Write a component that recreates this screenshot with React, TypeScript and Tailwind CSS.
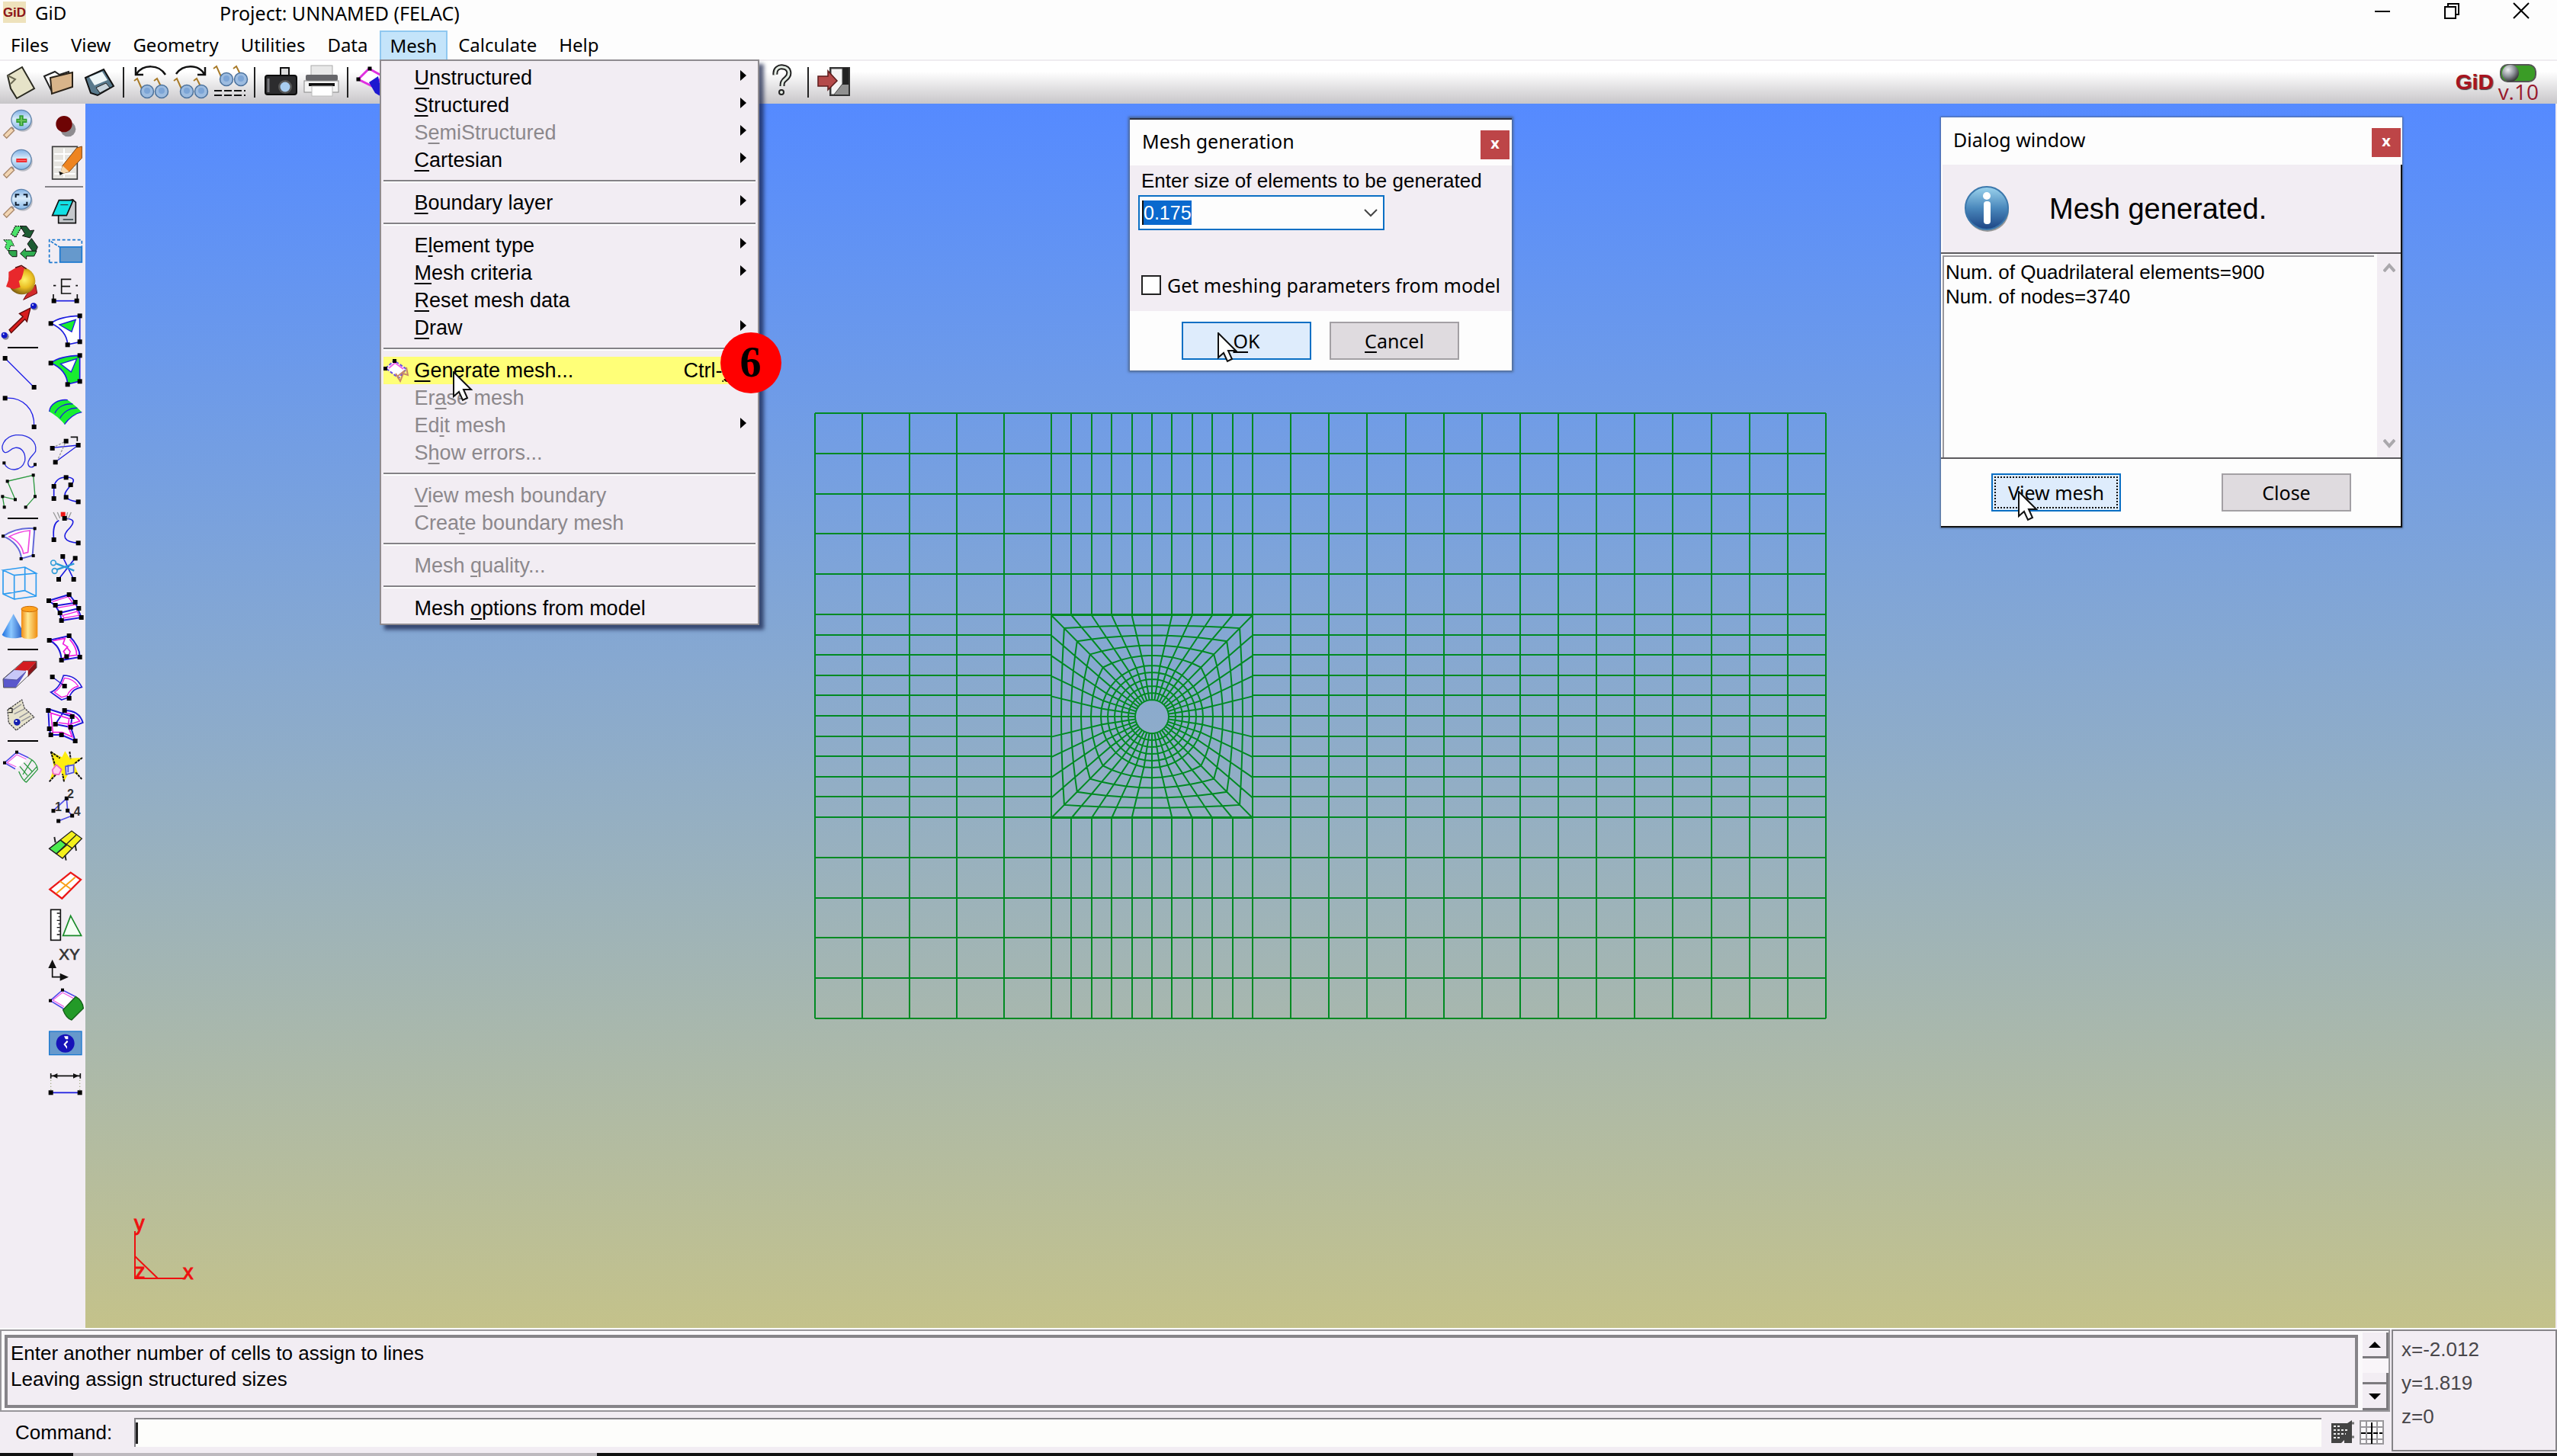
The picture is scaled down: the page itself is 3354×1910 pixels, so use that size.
import React from "react";

type Kids = { children?: React.ReactNode };

/* ---------- small drawing helpers ---------- */

const Dots = ({ at, s = 18, fill = "#000" }: { at: number[][]; s?: number; fill?: string }) => (
  <>
    {at.map(([x, y], i) => (
      <rect key={i} x={x - s / 2} y={y - s / 2} width={s} height={s} fill={fill} />
    ))}
  </>
);

const Tool = ({ x, y, label, children }: Kids & { x: number; y: number; label: string }) => (
  <button type="button" aria-label={label} className="block h-13 w-14">
    <svg viewBox={`${x} ${y} 168 156`} className="h-13 w-14 overflow-visible" fill="none">
      {children}
    </svg>
  </button>
);

const BarTool = ({ x, w, label, children }: Kids & { x: number; w: number; label: string }) => (
  <button type="button" aria-label={label} className="block shrink-0">
    <svg viewBox={`${x} 80 ${w} 56`} width={w} height={56} fill="none">
      {children}
    </svg>
  </button>
);

const BarSep = () => <div className="mx-[5px] h-10 w-0.5 shrink-0 bg-[#222]" />;

const Cursor = ({ className }: { className: string }) => (
  <svg viewBox="0 0 26 40" className={`pointer-events-none absolute h-10 w-[26px] ${className}`}>
    <path
      d="M1 1 V33 L8 27 L13 38 L19 35 L14 24 H24 Z"
      fill="#fff"
      stroke="#111"
      strokeWidth="2"
    />
  </svg>
);

const Lens = ({ dy, children }: Kids & { dy: number }) => (
  <g transform={`translate(0 ${dy})`}>
    <path d="M52 112 L38 126" stroke="#8d8f96" strokeWidth="12" />
    <path d="M44 112 L14 142 L26 154 L56 124 Z" fill="#f3d6b4" stroke="#a8876a" strokeWidth="4" />
    <circle cx="90" cy="90" r="38" fill="#b9bcc4" />
    <circle cx="84" cy="82" r="39" fill="url(#lens)" stroke="#5f84ae" strokeWidth="4" />
    {children}
  </g>
);

const Glasses = ({ x, y }: { x: number; y: number }) => (
  <g>
    <path
      d={`M${x} ${y + 3} l4 -3 l8 18 M${x + 26} ${y + 3} l4 -3 l8 16`}
      stroke="#a87a28"
      strokeWidth="2"
    />
    <circle cx={x + 17} cy={y + 17} r="8.5" fill="#9dbce0" stroke="#4b719c" strokeWidth="1.5" />
    <circle cx={x + 36} cy={y + 17} r="8.5" fill="#9dbce0" stroke="#4b719c" strokeWidth="1.5" />
    <circle cx={x + 17} cy={y + 16} r="4" fill="#7da5d6" />
    <circle cx={x + 36} cy={y + 16} r="4" fill="#7da5d6" />
  </g>
);

/* ---------- left tool columns ---------- */

const ColumnOne = () => (
  <div className="flex w-14 flex-col">
    <Tool x={0} y={18} label="Zoom in">
      <defs>
        <linearGradient id="lens" x1="0" y1="0" x2="0" y2="1">
          <stop offset="0" stopColor="#7fb0e4" />
          <stop offset=".45" stopColor="#d9ebfa" />
          <stop offset="1" stopColor="#86b8e8" />
        </linearGradient>
      </defs>
      <Lens dy={0}>
        <path d="M84 64 V106 M64 85 H106" stroke="#2d9a33" strokeWidth="16" />
        <path d="M84 68 V102 M68 85 H102" stroke="#6cc45c" strokeWidth="6" />
      </Lens>
    </Tool>
    <Tool x={0} y={174} label="Zoom out">
      <Lens dy={156}>
        <rect x="64" y="78" width="42" height="15" fill="#f0282c" />
        <path d="M68 86 H102" stroke="#ff8080" strokeWidth="3" />
      </Lens>
    </Tool>
    <Tool x={0} y={330} label="Zoom frame">
      <Lens dy={312}>
        <path
          d="M62 76 V64 H76 M92 64 H106 V76 M106 92 V104 H92 M76 104 H62 V92"
          stroke="#0c1a2c"
          strokeWidth="6"
        />
      </Lens>
    </Tool>
    <Tool x={0} y={486} label="Redraw">
      <path d="M60 500 H88 L76 518 L62 544 L44 532 Z" fill="#4be36a" stroke="#111" strokeWidth="4" strokeDasharray="6 3" />
      <path d="M80 500 H104 L118 518 L134 516 L118 546 L88 538 L98 530 Z" fill="#1d5c33" stroke="#111" strokeWidth="3" />
      <path d="M14 554 H44 L56 578 L42 576 L34 600 L20 584 L26 566 Z" fill="#4be36a" stroke="#111" strokeWidth="3" strokeDasharray="6 3" />
      <path d="M34 596 H66 V620 H48 L36 608 Z" fill="#2ea84c" stroke="#111" strokeWidth="3" />
      <path d="M124 548 L148 582 L136 610 L108 570 Z" fill="#1d5c33" stroke="#111" strokeWidth="3" />
      <path d="M80 608 L100 588 V598 H144 L134 618 H104 V630 Z" fill="#2fae50" stroke="#111" strokeWidth="3" />
    </Tool>
    <Tool x={0} y={642} label="Render">
      <defs>
        <radialGradient id="ball" cx=".6" cy=".45" r=".6">
          <stop offset="0" stopColor="#fff36a" />
          <stop offset=".5" stopColor="#e9bd22" />
          <stop offset="1" stopColor="#7a5a10" />
        </radialGradient>
      </defs>
      <path d="M92 790 L146 764 L140 730 L104 770 Z" fill="#d22a2a" stroke="#6b0e0e" strokeWidth="3" />
      <circle cx="86" cy="716" r="53" fill="url(#ball)" />
      <path d="M34 680 L62 664 L78 656 L96 664 L90 690 L84 708 L74 716 L80 740 L54 748 L24 738 L34 710 Z" fill="#e8282c" />
      <path d="M60 664 L84 655 L104 668" stroke="#5c1010" strokeWidth="5" />
    </Tool>
    <Tool x={0} y={798} label="Rotate">
      <path d="M36 908 L90 856 L76 844 L120 822 L106 876 L98 866 L44 920 Z" fill="#d81c1c" stroke="#5e0808" strokeWidth="4" />
      <circle cx="136" cy="818" r="13" fill="#8a8a96" />
      <circle cx="132" cy="814" r="12" fill="#1018c8" />
      <circle cx="22" cy="934" r="13" fill="#8a8a96" />
      <circle cx="17" cy="929" r="12" fill="#1018c8" />
      <Dots at={[[129, 810], [14, 925]]} s={5} fill="#fff" />
    </Tool>
    <SideSep />
    <Tool x={0} y={1002} label="Line">
      <path d="M20 1020 L134 1134" stroke="#2020e8" strokeWidth="4" />
      <Dots at={[[20, 1020], [134, 1134]]} />
    </Tool>
    <Tool x={0} y={1158} label="Arc">
      <path d="M20 1177 C90 1172 138 1220 134 1290" stroke="#2020e8" strokeWidth="4" />
      <Dots at={[[20, 1177], [134, 1290]]} />
    </Tool>
    <Tool x={0} y={-36} label="Spline">
      <path
        d="M16 82 C30 118 84 118 98 74 C102 40 84 20 60 22 C36 26 36 46 18 40 C-4 26 14 -22 62 -28 C116 -32 146 0 140 36 C134 50 112 60 110 84 C114 104 130 102 138 88"
        stroke="#2a30e0"
        strokeWidth="4"
      />
      <Dots at={[[16, 82], [138, 88]]} s={12} />
    </Tool>
    <Tool x={0} y={120} label="Polyline">
      <path d="M17 256 L10 214 L60 226 L29 154 L131 130 L138 214 L101 256" stroke="#2c9a40" strokeWidth="4" />
      <Dots at={[[17, 256], [10, 214], [60, 226], [29, 154], [131, 130], [138, 214], [101, 256]]} s={12} />
    </Tool>
    <SideSep />
    <Tool x={0} y={324} label="NURBS surface">
      <path d="M12 370 C50 345 90 335 136 340 L128 446 L84 458 C82 420 52 385 12 370 Z" fill="#fff" stroke="#6468d8" strokeWidth="6" />
      <path d="M36 372 C66 356 90 350 118 348 L110 434 L92 438 C88 410 66 384 36 372 Z" stroke="#f048e0" strokeWidth="5" />
      <Dots at={[[12, 370], [137, 340], [131, 447], [83, 459]]} s={12} />
    </Tool>
    <Tool x={0} y={480} label="Volume">
      <path
        d="M12 504 L98 492 L142 516 L56 524 Z M12 504 V598 L56 618 V524 M56 618 L142 606 V516 M98 492 V584 L142 606 M98 584 L12 598"
        stroke="#2e9cf0"
        strokeWidth="5"
      />
    </Tool>
    <Tool x={0} y={636} label="Create object">
      <defs>
        <linearGradient id="cyl" x1="0" y1="0" x2="1" y2="0">
          <stop offset="0" stopColor="#f08a10" />
          <stop offset=".4" stopColor="#ffe890" />
          <stop offset="1" stopColor="#ee8c10" />
        </linearGradient>
        <linearGradient id="cone" x1="0" y1="0" x2="1" y2="0">
          <stop offset="0" stopColor="#1c6fe0" />
          <stop offset=".4" stopColor="#8cc8ff" />
          <stop offset="1" stopColor="#1048b8" />
        </linearGradient>
      </defs>
      <path d="M53 676 L98 758 C90 776 20 776 8 758 Z" fill="url(#cone)" />
      <path d="M84 656 V764 C90 778 142 778 148 764 V656 Z" fill="url(#cyl)" />
      <ellipse cx="116" cy="657" rx="32" ry="11" fill="#ffa21c" stroke="#c86c08" strokeWidth="3" />
    </Tool>
    <SideSep />
    <Tool x={0} y={840} label="Delete">
      <path d="M12 932 L60 896 H108 L62 966 H14 Z" fill="#5a58cc" />
      <path d="M12 932 L56 896 H110 L66 936 Z" fill="#c8c8f8" stroke="#55569c" strokeWidth="3" />
      <path d="M56 896 L92 862 H144 L110 900 Z" fill="#d41c20" />
      <path d="M110 900 L144 862 V888 L108 926 Z" fill="#8c1418" />
      <path d="M106 898 V930" stroke="#fff" strokeWidth="7" />
      <path d="M12 932 L92 862 H144 V888 L62 966 H14 Z" stroke="#555" strokeWidth="3" />
    </Tool>
    <Tool x={0} y={996} label="List">
      <path d="M30 1054 L86 1014 L96 1046 L134 1082 L64 1134 L34 1104 Z" fill="#e6e2cc" stroke="#444" strokeWidth="4" strokeDasharray="8 3" />
      <path d="M50 1054 L84 1032 M56 1070 L96 1050 M76 1084 L110 1064 M84 1098 L120 1078" stroke="#8e8e96" strokeWidth="4" />
      <path d="M34 1048 h14 v16 h-14" stroke="#222" strokeWidth="4" />
      <circle cx="67" cy="1102" r="13" fill="#1620b0" />
      <Dots at={[[64, 1098]]} s={6} fill="#fff" />
    </Tool>
    <SideSep />
    <Tool x={0} y={1200} label="Toggle mesh view">
      <path d="M18 1262 L66 1220 L112 1244 L60 1288 Z" fill="#fff" />
      <path d="M60 1286 L18 1262 L66 1220 L112 1242" stroke="#5048e8" strokeWidth="5" />
      <path d="M64 1278 L28 1262 L66 1230 L104 1248" stroke="#f060e8" strokeWidth="4" />
      <path
        d="M112 1242 C136 1254 146 1268 148 1288 L104 1338 C90 1334 80 1310 74 1296 M78 1276 L108 1312 M94 1262 L126 1296 M126 1250 L90 1308 M146 1276 L96 1330"
        stroke="#2c9a40"
        strokeWidth="4"
      />
      <Dots at={[[18, 1262], [66, 1220]]} s={12} />
    </Tool>
  </div>
);

const SideSep = () => (
  <div className="flex h-4 items-center justify-center pl-1">
    <div className="h-0.5 w-10 bg-black" />
  </div>
);

const ColumnTwo = () => (
  <div className="flex w-14 flex-col">
    <Tool x={168} y={18} label="Record">
      <circle cx="268" cy="118" r="30" fill="#8e8c90" />
      <circle cx="252" cy="98" r="32" fill="#6e0404" />
    </Tool>
    <Tool x={168} y={174} label="Edit table">
      <rect x="206" y="187" width="98" height="128" fill="#e6e4e0" stroke="#3a3a3a" strokeWidth="5" />
      <path d="M214 216 H296 M214 242 H296 M214 268 H296 M252 194 V308 M214 294 H296" stroke="#fff" strokeWidth="6" />
      <path d="M246 262 L302 192 L322 186 V232 L272 286 L240 294 Z" fill="#ee8420" stroke="#7c4818" strokeWidth="3" />
      <path d="M246 262 L272 286 L236 296 Z" fill="#f4d8b0" />
      <path d="M232 284 L250 292 L236 300 Z" fill="#111" />
    </Tool>
    <div className="flex h-2.5 items-center justify-center">
      <div className="h-0.5 w-[50px] bg-[#858388]" />
    </div>
    <Tool x={168} y={360} label="Book">
      <path d="M230 410 L286 396 L298 406 V488 H230 Z" fill="#c6c8cc" stroke="#111" strokeWidth="5" />
      <path d="M232 398 H288 L262 458 H206 Z" fill="#12e0e4" stroke="#111" strokeWidth="5" />
      <path d="M238 416 H268 M248 474 H288" stroke="#2a3a40" strokeWidth="4" />
    </Tool>
    <Tool x={168} y={516} label="Scale view">
      <rect x="236" y="582" width="86" height="60" fill="#6699cc" stroke="#1a78d0" strokeWidth="5" />
      <path d="M194 643 V554 H322 V580 M194 643 H234" stroke="#1a78d0" strokeWidth="5" strokeDasharray="12 8" />
      <path d="M200 560 L234 582" stroke="#1a78d0" strokeWidth="5" strokeDasharray="12 5" />
    </Tool>
    <Tool x={168} y={672} label="Edge size">
      <path d="M280 709 H242 V765 H280 M242 737 H276 M210 734 H220 M298 734 H306 M210 768 V790 M304 768 V790" stroke="#111" strokeWidth="5" />
      <path d="M212 794 H302" stroke="#1c1ce0" strokeWidth="5" />
      <Dots at={[[212, 794], [302, 794]]} />
    </Tool>
    <Tool x={168} y={828} label="Surface hole">
      <path d="M200 882 C230 860 270 854 314 853 V956 L266 966 C264 930 240 900 200 882 Z" fill="#fff" stroke="#1c1ce0" strokeWidth="5" />
      <path d="M234 888 L298 868 L282 916 Z" fill="#18ee30" stroke="#1c1ce0" strokeWidth="4" />
      <Dots at={[[200, 883], [314, 853], [314, 955], [266, 967]]} />
    </Tool>
    <Tool x={168} y={984} label="Surface fill">
      <path d="M200 1038 C230 1016 270 1010 314 1009 V1110 L266 1122 C264 1086 240 1056 200 1038 Z" fill="#18ee30" stroke="#1c1ce0" strokeWidth="5" />
      <path d="M238 1042 L302 1022 L280 1074 Z" fill="#fff" stroke="#1c1ce0" strokeWidth="4" />
      <Dots at={[[200, 1039], [314, 1009], [314, 1111], [266, 1123]]} />
    </Tool>
    <Tool x={168} y={1140} label="Parallel surfaces">
      <path d="M194 1230 C196 1200 230 1180 266 1184 C284 1196 292 1204 304 1214 L322 1232 C296 1236 270 1256 254 1280 C240 1262 214 1240 194 1230 Z" fill="#18ee30" />
      <path
        d="M194 1230 C196 1200 230 1180 266 1184 M216 1236 C226 1212 256 1196 286 1200 M236 1256 C250 1230 276 1214 304 1216 M254 1280 C270 1256 296 1236 322 1232"
        stroke="#1c1ce0"
        strokeWidth="4"
      />
    </Tool>
    <Tool x={168} y={-54} label="Swap lines">
      <path d="M206 22 L308 12 L218 78" stroke="#1c1ce0" strokeWidth="4" />
      <path d="M206 22 L260 -4 L226 72" stroke="#999" strokeWidth="4" strokeDasharray="9 5" />
      <path d="M278 -20 H304 V-4" stroke="#111" strokeWidth="5" />
      <Dots at={[[206, 24], [260, -4], [308, 12], [218, 79]]} />
    </Tool>
    <Tool x={168} y={102} label="Edit spline">
      <path d="M212 222 V174 C220 144 240 138 260 138 C286 138 300 148 278 170 C256 196 250 206 260 216 C276 234 294 232 308 235" stroke="#1c1ce0" strokeWidth="5" />
      <Dots at={[[212, 222], [212, 174], [260, 139], [278, 168], [260, 217], [308, 235]]} />
    </Tool>
    <Tool x={168} y={258} label="Split spline">
      <path d="M212 384 C208 350 212 316 232 308 M256 300 C290 302 296 312 276 336 C240 370 250 392 308 397" stroke="#1c1ce0" strokeWidth="5" />
      <path d="M210 276 L226 306 M226 276 L236 300 M280 276 L266 306 M266 276 L260 300" stroke="#999" strokeWidth="4" />
      <Dots at={[[248, 284]]} fill="#f01818" />
      <Dots at={[[212, 384], [308, 397], [254, 300]]} />
    </Tool>
    <Tool x={168} y={414} label="Trim">
      <path d="M246 450 L290 540 M296 456 L230 540" stroke="#1c1ce0" strokeWidth="5" />
      <path d="M222 478 L292 506 M222 502 L292 478" stroke="#2e9cd8" strokeWidth="7" />
      <circle cx="210" cy="475" r="10" stroke="#2e9cd8" strokeWidth="5" />
      <circle cx="215" cy="507" r="10" stroke="#2e9cd8" strokeWidth="5" />
      <Dots at={[[247, 450], [296, 457], [231, 540], [290, 540]]} />
    </Tool>
    <Tool x={168} y={570} label="Coons surface">
      <path d="M192 624 L272 600 L322 690 L242 702 Z" fill="#fff" />
      <path d="M192 624 L272 600 L296 630 L320 690 L242 702 L236 672 L216 642 Z M216 644 L296 632 M236 672 L310 654" stroke="#2018d8" strokeWidth="6" />
      <path d="M206 628 L268 608 L284 630 M226 652 L296 640 M246 682 L304 666 L310 682 L252 692 Z" stroke="#f020e0" strokeWidth="4" />
      <Dots at={[[192, 624], [272, 600], [296, 630], [218, 642], [310, 654], [236, 672], [320, 690], [242, 702]]} />
    </Tool>
    <Tool x={168} y={726} label="Cut surface">
      <path d="M194 780 L272 762 C300 790 314 816 314 846 L242 858 C240 820 224 794 194 780 Z" fill="#fff" stroke="#2018d8" strokeWidth="6" />
      <path d="M208 782 L256 772 L248 794 L266 806 L250 824 L262 842 L248 850 M274 776 C294 798 302 816 302 838 L270 842 L276 824 L262 806" stroke="#f020e0" strokeWidth="5" />
      <Dots at={[[194, 780], [272, 762], [314, 846], [242, 858], [262, 844]]} />
    </Tool>
    <Tool x={168} y={882} label="Offset surface">
      <path d="M250 918 C284 918 308 936 322 964 C300 968 284 976 272 1004 L242 1014 L200 984 C222 976 240 950 250 918 Z" fill="#fff" stroke="#2018d8" strokeWidth="5" />
      <path d="M254 928 C278 930 296 942 308 960 C284 966 272 980 264 998 L242 1004 L214 984 C234 974 246 950 254 928 Z" stroke="#f020e0" strokeWidth="4" />
      <path d="M206 924 L254 960" stroke="#2018d8" strokeWidth="4" />
      <Dots at={[[206, 924], [254, 960], [272, 1008]]} />
    </Tool>
    <Tool x={168} y={1038} label="Join surfaces">
      <path
        d="M190 1050 L284 1080 L278 1120 L296 1176 L242 1152 L200 1152 L194 1128 Z M254 1056 C290 1056 316 1070 326 1104 L278 1122 L218 1110 L254 1056"
        fill="#fff"
        stroke="#2018d8"
        strokeWidth="6"
      />
      <path d="M200 1066 L272 1088 L268 1118 L284 1160 L244 1142 L208 1142 Z M258 1066 C284 1066 302 1080 314 1098 L276 1110 L230 1104" stroke="#f020e0" strokeWidth="5" />
      <Dots at={[[190, 1056], [254, 1056], [284, 1080], [218, 1110], [278, 1122], [194, 1128], [200, 1152], [242, 1152], [296, 1176]]} />
    </Tool>
    <Tool x={168} y={1194} label="Explode">
      <path d="M200 1218 L244 1240 L256 1216 L274 1244 L324 1242 L292 1268 L310 1310 L274 1296 L252 1336 L240 1296 L196 1330 L212 1280 Z" fill="#ffee10" />
      <path d="M200 1218 L236 1244 M274 1218 L278 1246 M324 1242 L292 1266 M298 1300 L322 1326 M252 1336 L246 1306 M194 1336 L222 1306 M200 1218 L216 1270" stroke="#111" strokeWidth="6" strokeDasharray="10 3" />
      <path d="M206 1290 L222 1270 L242 1288 L232 1308 L210 1306 Z" fill="#ffd0f0" stroke="#f060c8" strokeWidth="5" />
      <path d="M258 1276 L290 1270 V1300 L260 1308 Z M268 1270 V1300" fill="#e0e0fc" stroke="#4c50e0" strokeWidth="5" />
    </Tool>
    <Tool x={168} y={30} label="Renumber">
      <path d="M210 130 L262 82 L266 130 L284 150 L230 171" stroke="#5050e8" strokeWidth="5" />
      <Dots at={[[210, 131], [262, 82], [266, 130], [284, 150], [230, 171]]} s={15} />
      <g fill="#333" fontFamily="Liberation Sans" fontWeight="700" fontSize="48">
        <text x="216" y="132">1</text>
        <text x="264" y="80">2</text>
        <text x="290" y="150">4</text>
      </g>
    </Tool>
    <Tool x={168} y={186} label="Normals">
      <path d="M194 280 L282 210 L322 240 L246 318 Z" fill="#f4f01c" stroke="#222" strokeWidth="4" />
      <path d="M194 280 L238 246 L262 266 L222 300 Z" fill="#4cec50" stroke="#222" strokeWidth="4" />
      <path d="M238 246 L286 280 M222 300 L300 226" stroke="#222" strokeWidth="4" />
      <path d="M214 234 L218 256 M296 266 L300 288 M256 306 L260 326" stroke="#222" strokeWidth="6" />
    </Tool>
    <Tool x={168} y={342} label="Boundary">
      <path d="M196 440 L278 374 L318 402 L244 476 Z" fill="#fff" stroke="#ec1818" strokeWidth="7" />
      <path d="M236 408 L278 438 M222 456 L296 392" stroke="#f8a018" strokeWidth="6" />
    </Tool>
    <Tool x={168} y={498} label="Measure">
      <rect x="200" y="520" width="38" height="120" fill="#fff" stroke="#111" strokeWidth="5" />
      <path d="M236 534 H224 M236 548 H230 M236 562 H224 M236 576 H230 M236 590 H224 M236 604 H230 M236 618 H224" stroke="#111" strokeWidth="4" />
      <path d="M278 544 L320 622 H248 Z" fill="#f4fff4" stroke="#188a28" strokeWidth="5" />
    </Tool>
    <Tool x={168} y={654} label="Coordinates">
      <text x="232" y="718" fill="#333" stroke="#333" strokeWidth="2" fontFamily="Liberation Sans" fontSize="62">
        XY
      </text>
      <path d="M206 736 V785 H250" stroke="#111" strokeWidth="5" />
      <path d="M206 716 L222 750 H190 Z M270 785 L236 770 V800 Z" fill="#111" />
    </Tool>
    <Tool x={168} y={810} label="Surface mesh">
      <path d="M198 878 L246 836 L296 864 L250 912 Z" fill="#fff" />
      <path d="M250 910 L198 878 L246 836 L296 862" stroke="#5048e8" strokeWidth="5" />
      <path d="M252 902 L208 876 L246 846 L288 868" stroke="#f060e8" strokeWidth="4" />
      <path d="M298 862 C316 872 326 886 328 908 L282 954 C266 950 254 930 248 914 Z" fill="#239a28" stroke="#145c18" strokeWidth="4" />
      <Dots at={[[198, 878], [246, 836]]} s={12} />
    </Tool>
    <Tool x={168} y={966} label="Information">
      <rect x="194" y="999" width="127" height="92" fill="#6699cc" stroke="#1a78d0" strokeWidth="4" />
      <circle cx="257" cy="1046" r="36" fill="#1612b8" />
      <path d="M252 1018 H268 V1030 H258 Z M264 1034 L250 1050 L264 1068 V1058 L258 1050 L268 1040 Z" fill="#fff" />
    </Tool>
    <Tool x={168} y={1122} label="Dimension">
      <path d="M200 1174 H316 M200 1164 V1184 M316 1164 V1184" stroke="#111" strokeWidth="5" />
      <path d="M206 1174 L226 1164 V1184 Z M310 1174 L288 1164 V1184 Z" fill="#111" />
      <path d="M200 1190 V1232 M314 1190 V1232" stroke="#aab08c" strokeWidth="4" strokeDasharray="4 8" />
      <path d="M200 1240 H314" stroke="#1c1ce0" strokeWidth="5" />
      <Dots at={[[200, 1240], [314, 1240]]} />
    </Tool>
  </div>
);

/* ---------- top bar ---------- */

const Caption = ({ label, children }: Kids & { label: string }) => (
  <button type="button" aria-label={label} className="flex w-[91px] justify-center">
    <svg viewBox="0 0 24 24" className="h-6 w-6" fill="none" stroke="#000" strokeWidth="2">
      {children}
    </svg>
  </button>
);

const Toolbar = () => (
  <div className="flex h-14 items-center bg-linear-to-b from-white from-25% to-[#c8c6c9]">
    <BarTool x={0} w={52} label="New">
      <path d="M10 99 L29 88 L45 116 L22 129 L14 116 Z" fill="#e6e3c8" stroke="#2a2a20" strokeWidth="2" />
      <path d="M10 99 L20 104 L14 110" stroke="#6c6a54" strokeWidth="2" />
    </BarTool>
    <BarTool x={52} w={52} label="Open">
      <path d="M58 100 L72 94 L78 98 L90 94 L92 112 L68 120 Z" fill="#fff" stroke="#222" strokeWidth="2" />
      <path d="M66 102 L95 95 V114 L68 123 Z" fill="#d8b48a" stroke="#2a2218" strokeWidth="2" />
    </BarTool>
    <BarTool x={104} w={52} label="Save">
      <path d="M112 102 L136 91 L149 113 L128 125 L119 122 Z" fill="#58798c" stroke="#111" strokeWidth="2" />
      <path d="M117 101 L134 94 L141 105 L124 112 Z" fill="#eef6f8" />
      <path d="M126 115 L139 109 L144 115 L131 122 Z" fill="#c8d4dc" stroke="#222" strokeWidth="1" />
    </BarTool>
    <BarSep />
    <BarTool x={168} w={56} label="Previous view">
      <path d="M179 97 C188 84 208 84 217 98 M178 88 V98 H188" stroke="#111" strokeWidth="2.5" />
      <Glasses x={176} y={103} />
    </BarTool>
    <BarTool x={224} w={54} label="Next view">
      <path d="M231 97 C240 84 260 84 268 97 M269 88 V98 H259" stroke="#111" strokeWidth="2.5" />
      <Glasses x={228} y={103} />
    </BarTool>
    <BarTool x={278} w={50} label="Views list">
      <Glasses x={280} y={87} />
      <path d="M281 119 H322 M281 125 H322" stroke="#111" strokeWidth="2" strokeDasharray="10 3" />
    </BarTool>
    <BarSep />
    <BarTool x={340} w={54} label="Snapshot">
      <path d="M368 98 V89 H379 V98" fill="#ddd" stroke="#111" strokeWidth="2" />
      <rect x="348" y="99" width="41" height="25" rx="3" fill="#2c2c2e" stroke="#0c0c0c" strokeWidth="2" />
      <path d="M352 103 V121" stroke="#77777c" strokeWidth="3" />
      <circle cx="374" cy="114" r="9" fill="#555" />
      <circle cx="374" cy="114" r="6.5" fill="#a8cdf0" />
    </BarTool>
    <BarTool x={394} w={56} label="Print">
      <rect x="408" y="86" width="28" height="14" fill="#e8e8e8" stroke="#aaa" />
      <rect x="401" y="98" width="42" height="8" rx="2" fill="#66666a" />
      <rect x="399" y="106" width="45" height="15" fill="#f4f4f4" stroke="#888" />
      <path d="M405 111 H439" stroke="#111" strokeWidth="4" />
      <rect x="409" y="113" width="27" height="13" fill="#fff" stroke="#bbb" />
    </BarTool>
    <BarSep />
    <BarTool x={462} w={50} label="Mesh view">
      <path d="M470 104 L484 90 L502 100 L490 114 Z" fill="#fff" stroke="#e030e0" strokeWidth="3" />
      <path d="M484 108 L496 100 L502 128 L492 122 Z" fill="#1c18d0" />
      <Dots at={[[470, 104], [485, 90]]} s={5} />
    </BarTool>
    <div className="w-[484px] shrink-0" />
    <BarTool x={996} w={58} label="Help">
      <path d="M1017 98 C1016 90 1022 87 1027 88 C1036 89 1037 98 1031 103 C1026 107 1026 109 1026 113" stroke="#222" strokeWidth="7" />
      <path d="M1017 98 C1016 90 1022 87 1027 88 C1036 89 1037 98 1031 103 C1026 107 1026 109 1026 113" stroke="#e4ece4" strokeWidth="3" />
      <circle cx="1025" cy="121" r="3" fill="#e4ece4" stroke="#222" strokeWidth="2" />
    </BarTool>
    <BarSep />
    <BarTool x={1066} w={54} label="Exit">
      <rect x="1089" y="89" width="25" height="36" fill="#909090" stroke="#333" strokeWidth="2" />
      <rect x="1105" y="89" width="8" height="22" fill="#222" />
      <path d="M1090 90 H1105 V110 L1094 124 H1090 Z" fill="#f4f4f4" stroke="#444" strokeWidth="1" />
      <path d="M1073 100 H1086 V93 L1098 106 L1086 118 V113 H1073 Z" fill="#b44a4a" stroke="#5c1c1c" strokeWidth="1.5" />
    </BarTool>
    <div className="flex-1" />
    <div className="mr-6 flex items-center gap-1.5">
      <span className="font-['Liberation_Sans',sans-serif] text-[28px] leading-none font-bold text-[#a81420] [text-shadow:1px_1px_1px_#444]">
        GiD
      </span>
      <div className="flex flex-col items-center">
        <svg viewBox="0 0 48 24" className="h-6 w-12">
          <rect x="1" y="1" width="46" height="22" rx="9" fill="#3a9c26" stroke="#555" strokeWidth="2" />
          <circle cx="14" cy="12" r="11" fill="url(#knob)" />
          <defs>
            <radialGradient id="knob" cx=".35" cy=".3" r=".8">
              <stop offset="0" stopColor="#eef0f2" />
              <stop offset=".5" stopColor="#8c9198" />
              <stop offset="1" stopColor="#222" />
            </radialGradient>
          </defs>
        </svg>
        <span className="font-['Open_Sans',sans-serif] text-[28px] leading-6 text-[#98182c]">v.10</span>
      </div>
    </div>
  </div>
);

/* ---------- mesh menu ---------- */

type Item = { t: string; u: number; sub?: boolean; off?: boolean; hot?: boolean };

const menuGroups: Item[][] = [
  [
    { t: "Unstructured", u: 0, sub: true },
    { t: "Structured", u: 0, sub: true },
    { t: "SemiStructured", u: 1, sub: true, off: true },
    { t: "Cartesian", u: 0, sub: true },
  ],
  [{ t: "Boundary layer", u: 0, sub: true }],
  [
    { t: "Element type", u: 1, sub: true },
    { t: "Mesh criteria", u: 0, sub: true },
    { t: "Reset mesh data", u: 0 },
    { t: "Draw", u: 0, sub: true },
  ],
  [
    { t: "Generate mesh...", u: 0, hot: true },
    { t: "Erase mesh", u: 2, off: true },
    { t: "Edit mesh", u: 2, off: true, sub: true },
    { t: "Show errors...", u: 1, off: true },
  ],
  [
    { t: "View mesh boundary", u: 0, off: true },
    { t: "Create boundary mesh", u: 4, off: true },
  ],
  [{ t: "Mesh quality...", u: 5, off: true }],
  [{ t: "Mesh options from model", u: 5 }],
];

const Mnemonic = ({ text, at }: { text: string; at: number }) => (
  <span className="whitespace-pre">
    {text.slice(0, at)}
    <span className="underline decoration-2 underline-offset-4">{text[at]}</span>
    {text.slice(at + 1)}
  </span>
);

const MeshMenu = () => (
  <div className="absolute top-full left-[-2px] z-20 w-[498px] border-2 border-[#8f8b90] bg-[#f2edf3] px-[3px] pt-1 pb-0.5 font-['Liberation_Sans',sans-serif] text-[27px] shadow-[6px_6px_5px_rgba(20,30,70,0.7)]">
    {menuGroups.map((group, g) => (
      <React.Fragment key={g}>
        {g > 0 && (
          <div className="flex h-5 items-center">
            <div className="h-1 w-full border-b-2 border-t-2 border-t-[#848286] border-b-white" />
          </div>
        )}
        {group.map((item) => (
          <button
            key={item.t}
            type="button"
            className={`flex h-9 w-full items-center pr-3 leading-9 ${item.hot ? "bg-[#ffff78]" : ""} ${
              item.off ? "text-[#8c888c]" : "text-black"
            }`}
          >
            <span className="w-[41px] shrink-0">
              {item.hot && (
                <svg viewBox="0 0 34 32" className="h-8 w-[34px]" fill="none">
                  <path d="M3 13 L14 3 L30 14 L20 26 Z" fill="#fff" stroke="#6a50e0" strokeWidth="2" strokeDasharray="4 2" />
                  <path d="M7 13 L15 6 L26 14" stroke="#f060e8" strokeWidth="2" />
                  <path d="M16 20 L22 30 L26 20 L32 22 L30 12 M18 24 L28 16" stroke="#c88868" strokeWidth="2" />
                  <rect x="0" y="11" width="5" height="5" fill="#000" />
                  <rect x="12" y="1" width="5" height="5" fill="#000" />
                </svg>
              )}
            </span>
            <Mnemonic text={item.t} at={item.u} />
            {item.sub && (
              <svg viewBox="0 0 8 14" className="mb-1.5 ml-auto h-3.5 w-2">
                <path d="M0 0 L8 7 L0 14 Z" fill="#000" />
              </svg>
            )}
            {item.hot && (
              <span className="ml-auto pr-4">
                <Mnemonic text="Ctrl-g" at={5} />
              </span>
            )}
          </button>
        ))}
      </React.Fragment>
    ))}
    <Cursor className="top-[407px] left-[94px]" />
    <div className="absolute top-[356px] -right-[31px] flex h-20 w-20 items-center justify-center rounded-full bg-[#ff0000] pb-0.5 font-['Liberation_Serif',serif] text-[56px] leading-none font-bold text-black">
      6
    </div>
  </div>
);

const MenuButton = ({ label }: { label: string }) => (
  <button type="button" className="px-3.5">
    {label}
  </button>
);

/* ---------- finite element mesh ---------- */

const CX = 442;
const CY = 398;
const LEFT = 310;
const RIGHT = 574;
const TOP = 264;
const BOTTOM = 530;
const WIDTH = 1326;
const HEIGHT = 794;

const steps = (a: number, b: number, n: number) =>
  Array.from({ length: n + 1 }, (_, i) => Math.round(a + ((b - a) * i) / n));

const xs = [...steps(0, LEFT, 5), ...steps(RIGHT, WIDTH, 15)];
const ys = [...steps(0, TOP, 5), ...steps(BOTTOM, HEIGHT, 5)];
const innerXs = steps(LEFT, RIGHT, 10).slice(1, -1);
const innerYs = steps(TOP, BOTTOM, 10).slice(1, -1);

const squarePoint = (k: number): [number, number] => {
  const side = Math.floor(k / 10);
  const t = -1 + (k % 10) / 5;
  const p: [number, number][] = [
    [t, -1],
    [1, t],
    [-t, 1],
    [-1, -t],
  ];
  return [p[side][0] * 132, p[side][1] * 133];
};

const ringPoint = (k: number, ring: number): [number, number] => {
  const angle = ((-135 + k * 9) * Math.PI) / 180;
  const c = Math.cos(angle);
  const s = Math.sin(angle);
  if (ring >= 5) {
    const r = 67 - (ring - 5) * 9;
    return [CX + c * r, CY + s * r];
  }
  const f = ring / 5;
  const [sx, sy] = squarePoint(k);
  return [CX + sx * (1 - f) + c * 67 * f, CY + sy * (1 - f) + s * 67 * f];
};

const toPath = (pts: [number, number][]) =>
  "M" + pts.map(([x, y]) => `${x.toFixed(1)} ${y.toFixed(1)}`).join("L");

const ks = Array.from({ length: 40 }, (_, k) => k);
const rings = Array.from({ length: 11 }, (_, r) => r);

const gridPath =
  xs.map((x) => `M${x} 0V${HEIGHT}`).join("") +
  ys.map((y) => `M0 ${y}H${WIDTH}`).join("") +
  innerXs.map((x) => `M${x} 0V${TOP}M${x} ${BOTTOM}V${HEIGHT}`).join("") +
  innerYs.map((y) => `M0 ${y}H${LEFT}M${RIGHT} ${y}H${WIDTH}`).join("");

const radialPath =
  rings.map((r) => toPath(ks.map((k) => ringPoint(k, r))) + "Z").join("") +
  ks.map((k) => toPath(rings.map((r) => ringPoint(k, r)))).join("");

const FiniteMesh = () => (
  <svg
    viewBox={`-1 -1 ${WIDTH + 2} ${HEIGHT + 2}`}
    className="absolute top-[405px] left-[956px] h-[796px] w-[1328px]"
    fill="none"
    stroke="#008a22"
    strokeWidth="2"
  >
    <path d={gridPath} />
    <path d={radialPath} />
  </svg>
);

const Axes = () => (
  <svg
    viewBox="0 0 100 120"
    className="absolute bottom-10 left-[60px] h-[120px] w-[100px]"
    fill="none"
    stroke="#ee1010"
    strokeWidth="2"
  >
    <path d="M5 33 V95 H70 M5 66 L35 95" />
    <g fill="#ee1010" strokeWidth="1" fontFamily="Liberation Sans" fontSize="27">
      <text x="4" y="32">y</text>
      <text x="68" y="96">x</text>
      <text x="5" y="95">z</text>
    </g>
  </svg>
);

/* ---------- dialogs ---------- */

const CloseX = () => (
  <button
    type="button"
    aria-label="Close window"
    className="flex h-[38px] w-[38px] items-center justify-center bg-[#bd4547] pb-1 text-[20px] font-bold text-white"
  >
    x
  </button>
);

const MeshGenerationDialog = () => (
  <section
    aria-label="Mesh generation"
    className="absolute top-[19px] left-[1370px] w-[501px] border-t-2 border-t-[#2c3140] bg-[#fdfdfd] text-[25px] shadow-[0_0_3px_2px_rgba(70,90,120,0.8)]"
  >
    <header className="flex h-[60px] items-center justify-between pr-[3px] pl-4">
      <h2 className="pb-1">Mesh generation</h2>
      <div className="pt-1.5">
        <CloseX />
      </div>
    </header>
    <div className="flex h-[191px] flex-col bg-[#f2edf3] pl-[11px]">
      <label htmlFor="size" className="h-[39px] pl-1 font-['Liberation_Sans',sans-serif] text-[26px] leading-10">
        Enter size of elements to be generated
      </label>
      <div className="flex h-[46px] w-[323px] items-center border-2 border-[#0a6fc4] bg-[#fdfdfd] px-[3px]">
        <input
          id="size"
          defaultValue="0.175"
          className="h-8 w-[65px] border-l-2 border-[#111] bg-[#0a69ce] font-['Liberation_Sans',sans-serif] text-[25px] text-white outline-none"
        />
        <button type="button" aria-label="Show sizes" className="mr-1 ml-auto">
          <svg viewBox="0 0 18 12" className="h-3 w-[18px]" fill="none" stroke="#444" strokeWidth="2">
            <path d="M1 2 L9 10 L17 2" />
          </svg>
        </button>
      </div>
      <label className="mt-auto mb-[18px] flex items-center gap-2 pl-1 leading-8 whitespace-nowrap">
        <input type="checkbox" className="h-[26px] w-[26px] appearance-none border-2 border-[#222] bg-white" />
        Get meshing parameters from model
      </label>
    </div>
    <footer className="relative flex h-[78px] items-center gap-6 pl-[68px]">
      <button type="button" className="h-[50px] w-[170px] border-2 border-[#0a6fc4] bg-[#deecfc]">
        <Mnemonic text="OK" at={0} />
      </button>
      <button type="button" className="h-[50px] w-[170px] border-2 border-[#a3a0a4] bg-[#dfdbdf]">
        <Mnemonic text="Cancel" at={0} />
      </button>
      <Cursor className="top-[28px] left-[115px]" />
    </footer>
  </section>
);

const Chevron = ({ up }: { up?: boolean }) => (
  <svg viewBox="0 0 16 12" className="h-3 w-4" fill="none" stroke="#aaa8ac" strokeWidth="4">
    <path d={up ? "M1 11 L8 3 L15 11" : "M1 1 L8 9 L15 1"} />
  </svg>
);

const ResultDialog = () => (
  <section
    aria-label="Dialog window"
    className="absolute top-[18px] right-[201px] w-[605px] border-r-2 border-b-2 border-[#111] bg-[#fdfdfd] text-[25px] shadow-[0_0_2px_1px_rgba(70,90,120,0.8)]"
  >
    <header className="-mr-0.5 flex h-[62px] items-center justify-between bg-[#fdfdfd] pr-0.5 pl-4">
      <h2 className="pb-1">Dialog window</h2>
      <div className="pt-1">
        <CloseX />
      </div>
    </header>
    <div className="ml-0.5 flex h-[115px] items-center bg-[#f2edf3] pl-7">
      <svg viewBox="0 0 60 60" className="h-[60px] w-[60px]">
        <defs>
          <linearGradient id="info" x1="0" y1="0" x2="0" y2="1">
            <stop offset="0" stopColor="#9cd4ee" />
            <stop offset=".5" stopColor="#4a88bc" />
            <stop offset="1" stopColor="#1c4484" />
          </linearGradient>
        </defs>
        <circle cx="31" cy="32" r="28" fill="#999" />
        <circle cx="30" cy="29" r="28" fill="url(#info)" stroke="#3c78ac" strokeWidth="2" />
        <circle cx="30" cy="13" r="5" fill="#fff" />
        <rect x="26" y="20" width="9" height="30" rx="4" fill="#fff" />
      </svg>
      <p className="pl-[52px] font-['Liberation_Sans',sans-serif] text-[38px] text-black">
        Mesh generated.
      </p>
    </div>
    <div className="flex h-[271px] border-y-2 border-[#5c5a5e]">
      <div className="mt-0.5 ml-0.5 flex-1 border-t-2 border-l-2 border-[#9a989c] pt-1 pl-0.5 font-['Liberation_Sans',sans-serif] text-[26px] leading-8">
        <p>Num. of Quadrilateral elements=900</p>
        <p>Num. of nodes=3740</p>
      </div>
      <div className="ml-1 flex w-[31px] flex-col items-center justify-between bg-[#f2edf3] py-3">
        <Chevron up />
        <Chevron />
      </div>
    </div>
    <footer className="relative flex h-[88px] items-center justify-between pr-[65px] pl-[66px]">
      <button type="button" className="h-[50px] w-[170px] border-2 border-[#0a6fc4] bg-[#deecfc] p-0.5">
        <span className="flex h-full items-center justify-center border-2 border-dotted border-[#111]">View mesh</span>
      </button>
      <button type="button" className="h-[50px] w-[170px] border-2 border-[#a3a0a4] bg-[#dfdbdf]">
        Close
      </button>
      <Cursor className="top-[42px] left-[101px]" />
    </footer>
  </section>
);

/* ---------- message and command area ---------- */

const ScrollButton = ({ up }: { up?: boolean }) => (
  <button
    type="button"
    aria-label={up ? "Scroll up" : "Scroll down"}
    className="flex h-[34px] w-full items-center justify-center border-r-3 border-b-3 border-[#7c7a7e] bg-[#f2edf3]"
  >
    <svg viewBox="0 0 16 8" className="h-2 w-4">
      <path d={up ? "M0 8 L8 0 L16 8 Z" : "M0 0 L8 8 L16 0 Z"} fill="#000" />
    </svg>
  </button>
);

const StatusArea = () => (
  <div className="border-t-2 border-white font-['Liberation_Sans',sans-serif] text-[26px]">
    <div className="flex h-[162px]">
      <div className="flex min-w-0 flex-1 flex-col">
        <div className="flex h-[108px] border-2 border-[#98969a] bg-[#fbf9fb] pt-[2px] pl-1">
          <div className="my-[3px] flex-1 border-4 border-[#868488] bg-[#f2edf3] pt-[3px] pl-1 leading-[34px]">
            <p>Enter another number of cells to assign to lines</p>
            <p>Leaving assign structured sizes</p>
          </div>
          <div className="ml-1.5 flex w-[34px] flex-col">
            <ScrollButton up />
            <div className="flex-1 bg-[#f9f5f9]" />
            <div className="h-[15px] border-r-3 border-b-3 border-[#7c7a7e] bg-[#f2edf3]" />
            <ScrollButton />
          </div>
        </div>
        <div className="flex flex-1 items-center pr-2 pl-5">
          <label htmlFor="command" className="w-[156px]">
            Command:
          </label>
          <div className="flex h-[38px] flex-1 border-t-2 border-l-2 border-[#858388] bg-[#fdfdfb]">
            <div className="my-1 w-[3px] bg-[#222]" />
            <input id="command" className="min-w-0 flex-1 bg-transparent px-1 outline-none" />
          </div>
          <svg viewBox="0 0 32 32" className="ml-3 h-8 w-8">
            <path d="M1 4 H22 L28 0 V30 H18 V26 L14 30 H1 Z" fill="#444" />
            <path d="M4 8 H12 M4 13 H24 M4 18 H20 M4 23 H14" stroke="#eee" strokeWidth="2" strokeDasharray="3 2" />
            <path d="M28 4 H31 M28 22 H31" stroke="#777" strokeWidth="3" />
          </svg>
          <svg viewBox="0 0 32 32" className="ml-1.5 h-8 w-8" fill="none">
            <path d="M1 1 H31 V31 H1 Z M9 1 V31 M23 1 V31 M1 9 H31 M1 25 H31" fill="#fbf9fb" stroke="#9a989c" strokeWidth="2" />
            <path d="M16 3 V31" stroke="#000" strokeWidth="2" />
            <path d="M2 17 H30" stroke="#000" strokeWidth="2" strokeDasharray="6 2" />
          </svg>
        </div>
      </div>
      <div className="ml-0.5 h-[160px] w-[217px] border-2 border-[#868488] pt-0.5 pl-[11px] leading-11 text-[#48464a]">
        <p>x=-2.012</p>
        <p>y=1.819</p>
        <p>z=0</p>
      </div>
    </div>
    <div className="flex h-1">
      <div className="w-24 bg-[#111]" />
      <div className="w-[687px] bg-[#bdb9be]" />
      <div className="flex-1 bg-[#111]" />
    </div>
  </div>
);

/* ---------- application ---------- */

export default function App() {
  return (
    <div className="flex min-h-screen flex-col bg-[#f2edf3] font-['Noto_Sans','Open_Sans',sans-serif] text-[24px] leading-none text-black">
      <header className="border-b-2 border-[#efecf0] bg-[#fdfdfd]">
        <div className="flex h-10 items-start">
          <span className="mt-0.5 ml-1 flex h-7 w-[30px] items-center justify-center bg-[#eee2bc] font-['Liberation_Sans',sans-serif] text-[17px] font-bold text-[#8c1418]">
            GiD
          </span>
          <h1 className="w-[242px] pl-3 leading-[34px]">GiD</h1>
          <p className="flex-1 pl-3 text-[25px] leading-[34px]">Project: UNNAMED (FELAC)</p>
          <div className="flex h-7 items-center pr-0.5">
            <Caption label="Minimize">
              <path d="M2 13 H22" />
            </Caption>
            <Caption label="Restore">
              <path d="M3 7 H17 V22 H3 Z M7 7 V3 H21 V17 H17" />
            </Caption>
            <Caption label="Close">
              <path d="M2 2 L22 22 M22 2 L2 22" />
            </Caption>
          </div>
        </div>
        <nav className="flex h-[38px] gap-px">
          <MenuButton label="Files" />
          <MenuButton label="View" />
          <MenuButton label="Geometry" />
          <MenuButton label="Utilities" />
          <MenuButton label="Data" />
          <div className="relative -mr-px flex border-2 border-b-0 border-[#90c8f0] bg-[#c4e4fa]">
            <button type="button" className="px-3">
              Mesh
            </button>
            <MeshMenu />
          </div>
          <MenuButton label="Calculate" />
          <MenuButton label="Help" />
        </nav>
      </header>
      <Toolbar />
      <div className="flex flex-1">
        <aside className="flex w-28 shrink-0">
          <ColumnOne />
          <ColumnTwo />
        </aside>
        <main className="relative mr-0.5 flex-1 bg-linear-to-b from-[#558aff] to-[#c4c28a]">
          <FiniteMesh />
          <Axes />
          <MeshGenerationDialog />
          <ResultDialog />
        </main>
      </div>
      <StatusArea />
    </div>
  );
}
